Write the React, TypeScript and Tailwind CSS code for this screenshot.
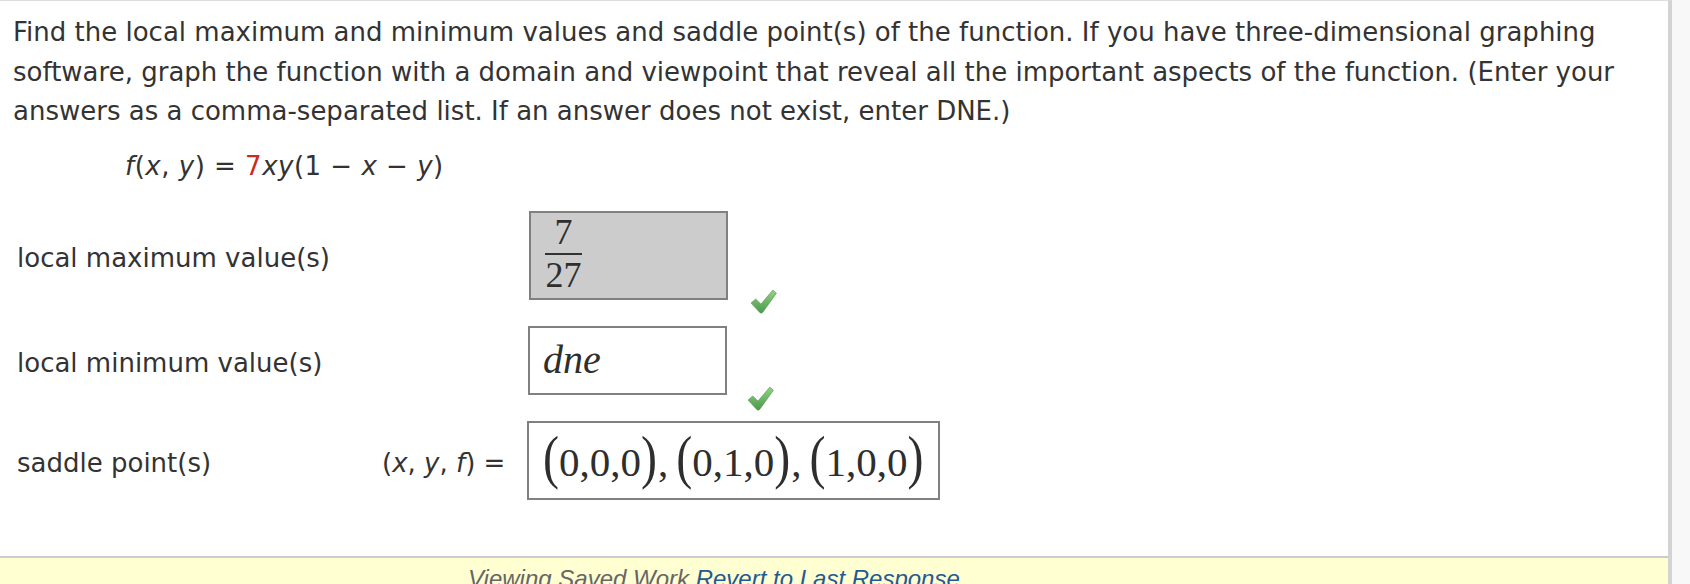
import React from "react";

function Check({ className }: { className?: string }) {
  return (
    <svg width="27" height="25" viewBox="0 0 26 24" className={className}>
      <defs>
        <linearGradient id="ck" x1="0" y1="0" x2="0" y2="1">
          <stop offset="0" stopColor="#94d286" />
          <stop offset="1" stopColor="#4a984a" />
        </linearGradient>
      </defs>
      <path
        d="M1 13.5 L5.5 9.5 L10.5 14.5 L22 1 L25.5 4 L12.2 22.5 Q10.8 24 9.4 22.6 Z"
        fill="url(#ck)"
        stroke="#579c52"
        strokeWidth="0.6"
        strokeLinejoin="round"
      />
    </svg>
  );
}

function Paren({ c }: { c: string }) {
  return <span className="inline-block text-[48px] leading-none scale-y-[1.22] relative top-[-3px]">{c}</span>;
}

function Triple({ v }: { v: string }) {
  return (
    <span>
      <Paren c="(" />
      {v}
      <Paren c=")" />
    </span>
  );
}

export default function App() {
  const sans = "font-['DejaVu_Sans','Verdana',sans-serif]";
  const serif = "font-['Liberation_Serif','Times_New_Roman',serif]";

  return (
    <div className="w-[1690px] h-[584px] bg-[#f8f8f8] overflow-hidden">
      <div className="w-[1672px] h-full bg-white border-t border-t-[#dddddd] border-r-[4px] border-r-[#d3d3d3] flex flex-col">
        <div className={`flex-1 pl-[13px] pr-[10px] pt-[12px] text-[26px] text-[#333333] ${sans}`}>
          <p className="leading-[39.5px]">
            Find the local maximum and minimum values and saddle point(s) of the function. If you have
            three-dimensional graphing software, graph the function with a domain and viewpoint that
            reveal all the important aspects of the function. (Enter your answers as a comma-separated
            list. If an answer does not exist, enter DNE.)
          </p>

          <div className="pl-[112px] mt-[15px] leading-[39px] tracking-[0.5px]">
            <i>f</i>(<i>x</i>, <i>y</i>) = <span className="text-[#cc2a1c]">7</span>
            <i>xy</i>(1 − <i>x</i> − <i>y</i>)
          </div>

          {/* answers */}
          <div className="flex flex-col gap-[26px] mt-[25px]">
            <div className="flex items-center">
              <div className="w-[516px] pl-[4px] pt-[6px]">local maximum value(s)</div>
              <div className="flex items-end">
                <div className="w-[199px] h-[89px] bg-[#cccccc] border-2 border-[#808080] flex items-center pl-[14px] pb-[4px]">
                  <span className={`inline-flex flex-col items-center text-[36px] leading-none text-[#2e2e2e] ${serif}`}>
                    <span className="mb-[3px]">7</span>
                    <span className="w-[37px] h-[2px] bg-[#333]" />
                    <span className="mt-[2px]">27</span>
                  </span>
                </div>
                <Check className="ml-[22px] mb-[-14px]" />
              </div>
            </div>

            <div className="flex items-center">
              <div className="w-[515px] pl-[4px] pt-[6px]">local minimum value(s)</div>
              <div className="flex items-end">
                <div className="w-[199px] h-[69px] bg-white border-2 border-[#808080] flex items-center pl-[13px]">
                  <span className={`italic text-[40px] leading-none text-[#2e2e2e] ${serif}`}>dne</span>
                </div>
                <Check className="ml-[20px] mb-[-16px]" />
              </div>
            </div>

            <div className="flex items-center">
              <div className="w-[369px] pl-[4px] pt-[6px]">saddle point(s)</div>
              <div className="w-[145px] pt-[6px]">
                (<i>x</i>, <i>y</i>, <i>f</i>) =
              </div>
              <div className="w-[413px] h-[79px] bg-white border-2 border-[#808080] flex items-center pl-[14px]">
                <span className={`text-[41px] leading-none text-[#2e2e2e] whitespace-nowrap ${serif}`}>
                  <Triple v="0,0,0" />
                  <span className="ml-[1px] mr-[8px]">,</span>
                  <Triple v="0,1,0" />
                  <span className="ml-[1px] mr-[8px]">,</span>
                  <Triple v="1,0,0" />
                </span>
              </div>
            </div>
          </div>
        </div>

        <div className="h-[28px] border-t-2 border-t-[#cccccc] bg-[#ffffd2] pl-[468px] pt-[7px] text-[24px] leading-[28px] italic font-['Liberation_Sans','Arial',sans-serif] whitespace-nowrap">
          <span className="text-[#666666]">Viewing Saved Work </span>
          <span className="text-[#1f5a92]">Revert to Last Response</span>
        </div>
      </div>
    </div>
  );
}
